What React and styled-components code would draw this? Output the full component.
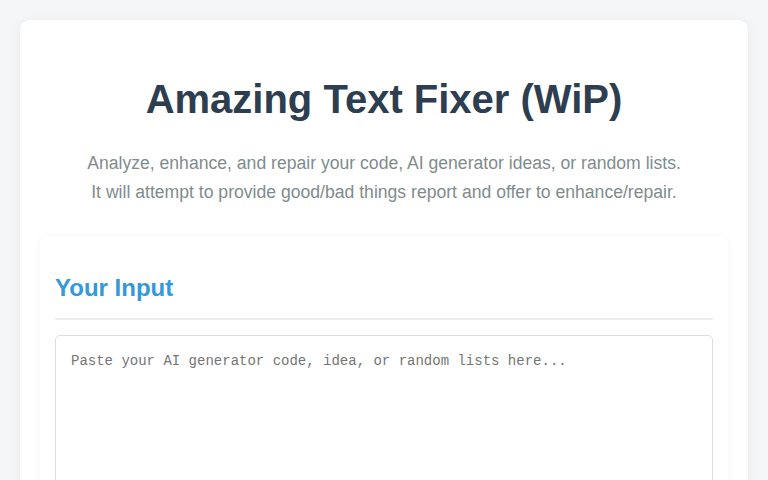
import React from "react";
import styled, { createGlobalStyle } from "styled-components";

const Global = createGlobalStyle`
  html, body { margin: 0; padding: 0; }
  body {
    background: #f5f6f8;
    font-family: "Liberation Sans", Arial, sans-serif;
    padding: 20px;
    overflow: hidden;
  }
  * { box-sizing: border-box; }
`;

const Card = styled.div`
  background: #ffffff;
  border-radius: 10px;
  box-shadow: 0 2px 12px rgba(0, 0, 0, 0.06);
  padding: 56px 20px 20px;
  min-height: 600px;
`;

const Title = styled.h1`
  margin: 0 0 27px;
  text-align: center;
  font-size: 40px;
  font-weight: 700;
  color: #2c3e50;
  line-height: 46px;
`;

const Subtitle = styled.p`
  margin: 0 0 29px;
  text-align: center;
  font-size: 17.6px;
  line-height: 29px;
  color: #7f8c8d;
`;

const Panel = styled.section`
  background: #fff;
  border-radius: 8px;
  box-shadow: 0 1px 8px rgba(0, 0, 0, 0.05);
  padding: 38px 15px 20px;
`;

const PanelTitle = styled.h2`
  margin: 0 0 15px;
  padding-bottom: 16px;
  border-bottom: 2px solid #eeeeee;
  font-size: 24px;
  line-height: 27.6px;
  font-weight: 700;
  color: #3498db;
`;

const Input = styled.textarea`
  display: block;
  width: 100%;
  height: 300px;
  padding: 15px;
  border: 1px solid #dddddd;
  border-radius: 5px;
  font-family: "Liberation Mono", "Courier New", monospace;
  font-size: 14px;
  line-height: 1.5;
  resize: vertical;
  outline: none;
  &::placeholder { color: #757575; }
`;

export default function App() {
  return (
    <>
      <Global />
      <Card>
        <Title>Amazing Text Fixer (WiP)</Title>
        <Subtitle>
          Analyze, enhance, and repair your code, AI generator ideas, or random lists.
          <br />
          It will attempt to provide good/bad things report and offer to enhance/repair.
        </Subtitle>
        <Panel>
          <PanelTitle>Your Input</PanelTitle>
          <Input placeholder="Paste your AI generator code, idea, or random lists here..." />
        </Panel>
      </Card>
    </>
  );
}
